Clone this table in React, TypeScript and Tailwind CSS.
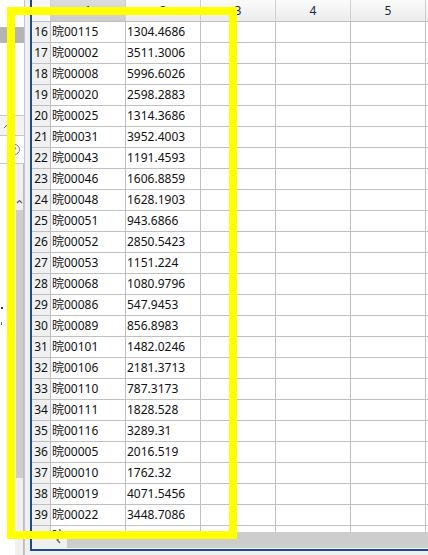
import React from "react";

const rows: [number, string, string][] = [
  [16, "晥00115", "1304.4686"],
  [17, "晥00002", "3511.3006"],
  [18, "晥00008", "5996.6026"],
  [19, "晥00020", "2598.2883"],
  [20, "晥00025", "1314.3686"],
  [21, "晥00031", "3952.4003"],
  [22, "晥00043", "1191.4593"],
  [23, "晥00046", "1606.8859"],
  [24, "晥00048", "1628.1903"],
  [25, "晥00051", "943.6866"],
  [26, "晥00052", "2850.5423"],
  [27, "晥00053", "1151.224"],
  [28, "晥00068", "1080.9796"],
  [29, "晥00086", "547.9453"],
  [30, "晥00089", "856.8983"],
  [31, "晥00101", "1482.0246"],
  [32, "晥00106", "2181.3713"],
  [33, "晥00110", "787.3173"],
  [34, "晥00111", "1828.528"],
  [35, "晥00116", "3289.31"],
  [36, "晥00005", "2016.519"],
  [37, "晥00010", "1762.32"],
  [38, "晥00019", "4071.5456"],
  [39, "晥00022", "3448.7086"],
  [40, "晥00023", "2210.1"],
];

const font = { fontFamily: '"Noto Sans", "Noto Sans CJK SC", sans-serif' };

function LeftPanel() {
  return (
    <div className="flex h-[555px] w-[25px] shrink-0 flex-col border-r border-[#c6c6c6] bg-white">
      <div className="h-[27px]" />
      <div className="h-[16px] bg-[#b4b4b4]" />
      <div className="h-[72px]" />
      <div className="flex h-[21px] items-center border-y border-[#c8c8c8] bg-[#f3f3f3] pl-[3px]">
        <svg width="6" height="6" viewBox="0 0 6 6">
          <path d="M1 5 L5 1" stroke="#666" strokeWidth="1" fill="none" />
        </svg>
      </div>
      <div className="flex h-[27px] items-center justify-end pr-[4px]">
        <div className="flex h-[11px] w-[11px] items-center justify-center rounded-full border border-[#777] text-[7px] leading-none text-[#555]">
          ?
        </div>
      </div>
      <div className="flex flex-1 flex-row border-t border-[#c8c8c8]">
        <div className="flex flex-1 flex-col">
          <div className="h-[143px]" />
          <div className="ml-[1px] h-[2px] w-[2px] bg-[#333]" />
          <div className="h-[13px]" />
          <div className="ml-[1px] h-[3px] w-[1px] bg-[#2a6fd6]" />
        </div>
        <div className="flex w-[9px] flex-col border-r border-[#bdbdbd] bg-[#f0f0f0]">
          <div className="h-[32px]" />
          <div className="flex h-[10px] items-center justify-center">
            <svg width="7" height="5" viewBox="0 0 7 5">
              <path d="M1 4 L3.5 1.5 L6 4" stroke="#606060" strokeWidth="1.2" fill="none" />
            </svg>
          </div>
          <div className="h-[4px]" />
          <div className="ml-[1px] h-[268px] w-[7px] bg-[#cdcdcd]" />
        </div>
      </div>
    </div>
  );
}

function Header() {
  const cols = ["1", "2", "3", "4", "5", ""];
  return (
    <div className="flex h-[22px] shrink-0 border-b border-[#bfbfbf]">
      <div className="h-full w-[19px] shrink-0 border-r border-[#cfcfcf] bg-[#f7f7f7]" />
      {cols.map((c, i) => (
        <div
          key={i}
          className={
            "flex h-full w-[75px] shrink-0 items-center justify-center border-r border-[#cfcfcf] text-[12px] text-[#1b2a44] " +
            (i === 0
              ? "bg-gradient-to-b from-[#dcdcdc] to-[#cdcdcd]"
              : "bg-gradient-to-b from-[#fbfbfb] to-[#ececec]")
          }
        >
          {c}
        </div>
      ))}
    </div>
  );
}

function Row({ n, a, b }: { n: number; a: string; b: string }) {
  return (
    <div className="flex h-[21px] shrink-0 border-b border-[#c0c0c0] text-[12px] leading-none text-[#111]">
      <div className="flex h-full w-[19px] shrink-0 items-center justify-center border-r border-[#c0c0c0] bg-[#f0f0f0]">
        {n}
      </div>
      <div className="flex h-full w-[75px] shrink-0 items-center border-r border-[#c0c0c0] bg-white pl-[1px]">
        {a}
      </div>
      <div className="flex h-full w-[75px] shrink-0 items-center border-r border-[#c0c0c0] bg-white pl-[1px]">
        {b}
      </div>
      <div className="h-full w-[75px] shrink-0 border-r border-[#c0c0c0] bg-white" />
      <div className="h-full w-[75px] shrink-0 border-r border-[#c0c0c0] bg-white" />
      <div className="h-full w-[75px] shrink-0 border-r border-[#c0c0c0] bg-white" />
      <div className="h-full w-[75px] shrink-0 bg-white" />
    </div>
  );
}

export default function App() {
  return (
    <div className="relative flex h-[555px] w-[428px] overflow-hidden bg-[#f0f0f0]" style={font}>
      <LeftPanel />
      <div className="w-[5px] shrink-0 bg-[#f0f0f0]" />
      <div className="flex h-[551px] flex-1 flex-col overflow-hidden border-b-2 border-l-2 border-[#1b4d86] bg-white">
        <Header />
        <div className="flex h-[510px] shrink-0 flex-col overflow-hidden">
          {rows.map(([n, a, b]) => (
            <Row key={n} n={n} a={a} b={b} />
          ))}
        </div>
        <div className="flex h-[16px] shrink-0">
          <div className="w-[18px] shrink-0 bg-[#f0f0f0]" />
          <div className="flex w-[17px] shrink-0 items-center justify-center bg-[#f0f0f0]">
            <svg width="5" height="8" viewBox="0 0 5 8">
              <path d="M4 1 L1.2 4 L4 7" stroke="#606060" strokeWidth="1.3" fill="none" />
            </svg>
          </div>
          <div className="flex-1 bg-[#cdcdcd]" />
        </div>
        <div className="h-[1px] shrink-0 bg-[#f4f4f4]" />
      </div>
      <div className="pointer-events-none absolute left-[7px] top-[7px] h-[532px] w-[230px] border-[8px] border-[#ffff00]" />
    </div>
  );
}
